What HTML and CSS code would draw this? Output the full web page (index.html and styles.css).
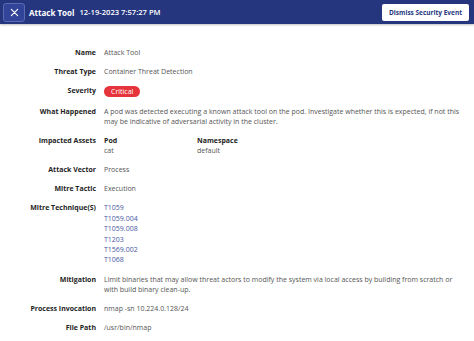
FILE: index.html
```html
<!DOCTYPE html>
<html lang="en">
<head>
    <meta charset="UTF-8">
    <meta name="viewport" content="width=device-width, initial-scale=1.0">
    <title>Attack Tool - Security Event</title>
    <link rel="stylesheet" href="styles.css">
</head>
<body>
    <div class="topbar">
        <div class="topbar-left">
            <button class="close-btn" aria-label="Close">
                <svg width="9" height="9" viewBox="0 0 10 10"><path d="M1.5 1.5 L8.5 8.5 M8.5 1.5 L1.5 8.5" stroke="#fff" stroke-width="1.3" stroke-linecap="round"/></svg>
            </button>
            <span class="event-title">Attack Tool</span>
            <span class="event-date">12-19-2023 7:57:27 PM</span>
        </div>
        <button class="dismiss-btn">Dismiss Security Event</button>
    </div>

    <div class="details">
        <div class="label">Name</div>
        <div class="value">Attack Tool</div>

        <div class="label">Threat Type</div>
        <div class="value">Container Threat Detection</div>

        <div class="label">Severity</div>
        <div class="value"><span class="pill">Critical</span></div>

        <div class="label">What Happened</div>
        <div class="value">A pod was detected executing a known attack tool on the pod. Investigate whether this is expected, if not this may be indicative of adversarial activity in the cluster.</div>

        <div class="label">Impacted Assets</div>
        <div class="value">
            <div class="assets">
                <div class="asset-head">Pod</div>
                <div class="asset-head">Namespace</div>
                <div>cat</div>
                <div>default</div>
            </div>
        </div>

        <div class="label">Attack Vector</div>
        <div class="value">Process</div>

        <div class="label">Mitre Tactic</div>
        <div class="value">Execution</div>

        <div class="label">Mitre Technique(S)</div>
        <div class="value links">
            <a href="#">T1059</a>
            <a href="#">T1059.004</a>
            <a href="#">T1059.008</a>
            <a href="#">T1203</a>
            <a href="#">T1569.002</a>
            <a href="#">T1068</a>
        </div>

        <div class="label">Mitigation</div>
        <div class="value">Limit binaries that may allow threat actors to modify the system via local access by building from scratch or with build binary clean-up.</div>

        <div class="label">Process Invocation</div>
        <div class="value">nmap -sn 10.224.0.128/24</div>

        <div class="label">File Path</div>
        <div class="value">/usr/bin/nmap</div>
    </div>
</body>
</html>
```

FILE: styles.css
```css
* { box-sizing: border-box; }

body {
    font-family: 'Open Sans', 'Liberation Sans', sans-serif;
    margin: 0;
    background: #fff;
    color: #444;
}

.topbar {
    height: 24px;
    background: #25367f;
    display: flex;
    justify-content: space-between;
    align-items: center;
    padding: 0 5px 0 3px;
    box-shadow: 0 1px 2px rgba(0,0,0,0.25);
}

.topbar-left {
    display: flex;
    align-items: center;
}

.close-btn {
    width: 22px;
    height: 19px;
    display: flex;
    align-items: center;
    justify-content: center;
    background: #31449a;
    border: 1px solid #5a6bb0;
    border-radius: 3px;
    padding: 0;
    margin-right: 4px;
    cursor: pointer;
}

.event-title {
    color: #fff;
    font-weight: 700;
    font-size: 8px;
    margin-right: 5px;
}

.event-date {
    color: #fff;
    font-size: 7.6px;
    font-weight: 600;
}

.dismiss-btn {
    background: #fff;
    color: #25367f;
    border: none;
    border-radius: 2px;
    font-family: inherit;
    font-weight: 700;
    font-size: 6.5px;
    height: 17px;
    padding: 0 7px;
    cursor: pointer;
}

.details {
    display: grid;
    grid-template-columns: 96px 1fr;
    column-gap: 8px;
    row-gap: 9.2px;
    padding: 24px 14px 10px 0;
    font-size: 7px;
    line-height: 10px;
}

.label {
    text-align: right;
    font-weight: 700;
    color: #1e1e1e;
}

.value {
    color: #555;
}

.pill {
    display: inline-block;
    background: #e5343b;
    color: #fff;
    border-radius: 6px;
    padding: 0 7px;
    line-height: 11px;
}

.assets {
    display: grid;
    grid-template-columns: 93px 1fr;
}

.asset-head {
    font-weight: 700;
    color: #1e1e1e;
}

.links {
    display: flex;
    flex-direction: column;
    line-height: 10.4px;
}

.links a {
    color: #45579f;
    text-decoration: none;
}
```
